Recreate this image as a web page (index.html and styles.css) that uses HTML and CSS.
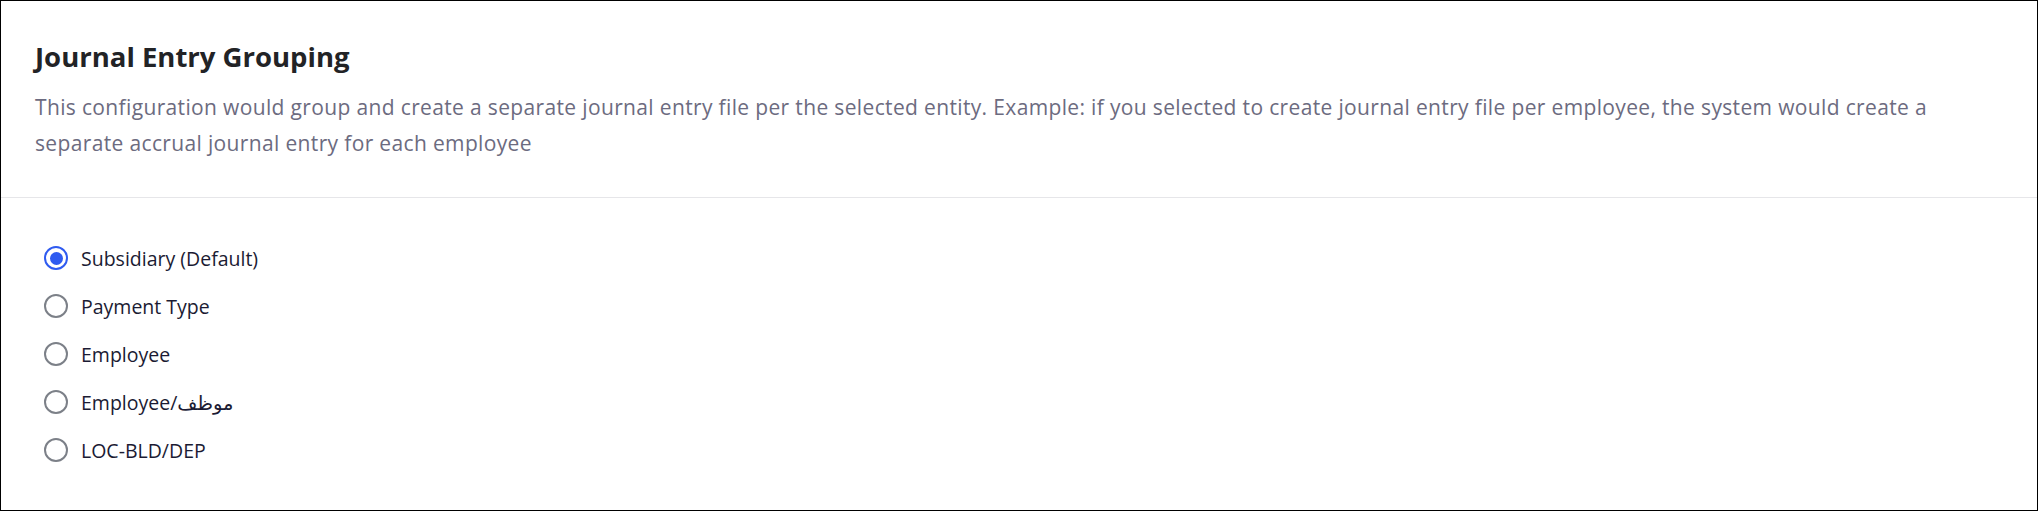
FILE: index.html
```html
<!DOCTYPE html>
<html lang="en">

<head>
    <meta charset="UTF-8">
    <meta name="viewport" content="width=device-width, initial-scale=1.0">
    <title>Journal Entry Grouping</title>
    <link rel="stylesheet" href="styles.css">
</head>

<body>

    <div class="card">
        <div class="card-header">
            <h2 class="card-title">Journal Entry Grouping</h2>
            <p class="card-desc">This configuration would group and create a separate journal entry file per the selected entity. Example: if you selected to create journal entry file per employee, the system would create a separate accrual journal entry for each employee</p>
        </div>

        <div class="card-body">
            <label class="radio-row">
                <input type="radio" name="grouping" class="radio-input" checked>
                <span class="radio-label">Subsidiary (Default)</span>
            </label>
            <label class="radio-row">
                <input type="radio" name="grouping" class="radio-input">
                <span class="radio-label">Payment Type</span>
            </label>
            <label class="radio-row">
                <input type="radio" name="grouping" class="radio-input">
                <span class="radio-label">Employee</span>
            </label>
            <label class="radio-row">
                <input type="radio" name="grouping" class="radio-input">
                <span class="radio-label">Employee/موظف</span>
            </label>
            <label class="radio-row">
                <input type="radio" name="grouping" class="radio-input">
                <span class="radio-label">LOC-BLD/DEP</span>
            </label>
        </div>
    </div>

</body>

</html>
```

FILE: styles.css
```css
body {
    font-family: "Open Sans", "DejaVu Sans", sans-serif;
    margin: 0;
    background-color: #fff;
}

.card {
    border: 1px solid #000;
    height: 511px;
    box-sizing: border-box;
}

.card-header {
    padding: 40px 34px 36px;
    border-bottom: 1px solid #e6e6e9;
}

.card-title {
    margin: 0;
    font-size: 27.5px;
    font-weight: 700;
    color: #222326;
    line-height: 32px;
}

.card-desc {
    margin: 16px 0 0;
    font-size: 21px;
    letter-spacing: 0.35px;
    line-height: 36px;
    color: #6c6b80;
}

.card-body {
    padding: 36px 43px;
    display: flex;
    flex-direction: column;
}

.radio-row {
    display: flex;
    align-items: center;
    gap: 13px;
    height: 48px;
    cursor: pointer;
}

.radio-input {
    appearance: none;
    width: 24px;
    height: 24px;
    margin: 0;
    border: 2px solid #7c8088;
    border-radius: 50%;
    box-sizing: border-box;
    display: grid;
    place-content: center;
}

.radio-input:checked {
    border-color: #2f5bf0;
}

.radio-input:checked::before {
    content: "";
    width: 13px;
    height: 13px;
    border-radius: 50%;
    background-color: #2f5bf0;
}

.radio-label {
    font-size: 19.5px;
    color: #1b1b33;
}
```
